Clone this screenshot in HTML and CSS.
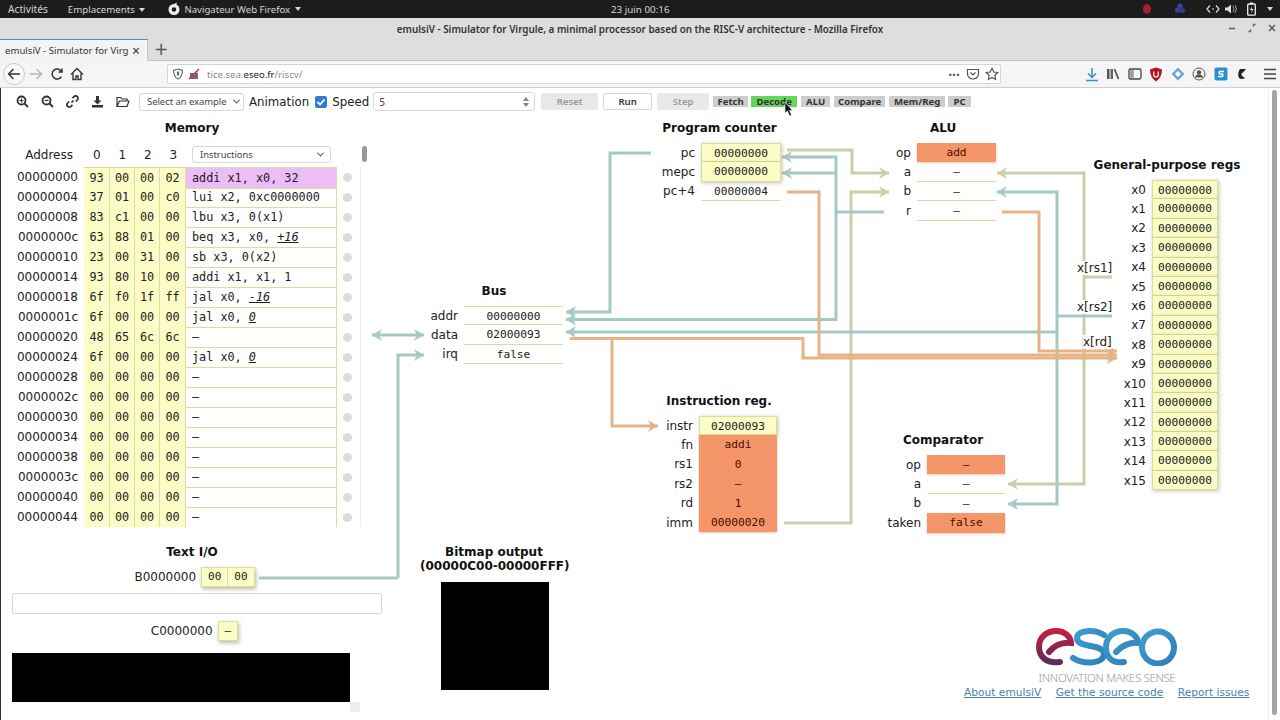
FILE: index.html
```html
<!DOCTYPE html>
<html>
  <head>
    <meta charset="utf-8">
    <title>emulsiV</title>
    <link rel="stylesheet" href="styles.css">
  </head>
  <body>
    <div class="topbar">
      <span class="top-item top-activities">Activités</span>
      <span class="top-item top-places">Emplacements <i class="caret"></i></span>
      <span class="top-item top-browser">
        <svg class="fx-icon" width="14" height="14" viewBox="0 0 14 14"><circle cx="7" cy="7.5" r="5.5" fill="#eee"/><circle cx="7" cy="7.5" r="2.2" fill="#1c1c1c"/><path d="M7 2 L10 0.5 L9 3.5z" fill="#eee"/></svg>
        Navigateur Web Firefox <i class="caret"></i>
      </span>
      <span class="top-clock">23 juin 00:16</span>
      <span class="top-tray">
        <svg width="12" height="14" viewBox="0 0 12 14"><ellipse cx="6" cy="7" rx="4" ry="5" fill="#a81c34"/></svg>
        <svg class="tray-blue" width="12" height="14" viewBox="0 0 12 14"><circle cx="6" cy="4" r="2.6" fill="#3a3f9e"/><circle cx="3.5" cy="8" r="2.6" fill="#3a3f9e"/><circle cx="8.5" cy="8.5" r="2.6" fill="#34388e"/></svg>
        <svg class="tray-net" width="14" height="10" viewBox="0 0 14 10" fill="none" stroke="#ddd" stroke-width="1.2"><path d="M4 1.5 L1 5 L4 8.5M10 1.5 L13 5 L10 8.5M6 5h2"/></svg>
        <svg class="tray-vol" width="13" height="10" viewBox="0 0 13 10"><path d="M0 3.5h2.5L6 0.5v9L2.5 6.5H0z" fill="#ddd"/><path d="M8 2 Q10 5 8 8M10 1 Q13 5 10 9" fill="none" stroke="#999"/></svg>
        <svg class="tray-bat" width="9" height="14" viewBox="0 0 9 14"><rect x="0.7" y="2" width="7.6" height="11.2" rx="1" fill="none" stroke="#eee" stroke-width="1.3"/><rect x="3" y="0.5" width="3" height="2" fill="#eee"/><path d="M5 4 L3 8h2l-1 3.5L6.5 7h-2z" fill="#eee"/></svg>
        <i class="caret caret-tray"></i>
      </span>
    </div>

    <div class="titlebar">
      <span class="title-text">emulsiV - Simulator for Virgule, a minimal processor based on the RISC-V architecture - Mozilla Firefox</span>
      <span class="win-buttons">
        <svg width="10" height="10" viewBox="0 0 10 10"><path d="M2 5.5h6" stroke="#555" stroke-width="1.4"/></svg>
        <svg width="10" height="10" viewBox="0 0 10 10"><path d="M1 9 L4 6v3zM9 1 L6 4V1z" fill="#777" stroke="#777" stroke-width=".5"/></svg>
        <svg width="10" height="10" viewBox="0 0 10 10"><path d="M2 2 L8 8M8 2 L2 8" stroke="#555" stroke-width="1.3"/></svg>
      </span>
    </div>

    <div class="tabbar">
      <div class="tab">
        <span class="tab-label">emulsiV - Simulator for Virg</span>
        <span class="tab-close">&times;</span>
      </div>
      <span class="tab-new">+</span>
    </div>

    <div class="navbar">
      <span class="nav-back">
        <svg width="14" height="14" viewBox="0 0 14 14" fill="none" stroke="#333" stroke-width="1.4"><path d="M13 7H1.5M6.5 2 L1.5 7 L6.5 12"/></svg>
      </span>
      <svg class="nav-forward" width="14" height="14" viewBox="0 0 14 14" fill="none" stroke="#b5b5b5" stroke-width="1.4"><path d="M1 7h11.5M7.5 2 L12.5 7 L7.5 12"/></svg>
      <svg class="nav-reload" width="14" height="14" viewBox="0 0 14 14" fill="none" stroke="#333" stroke-width="1.5"><path d="M11.5 9.5 A5 5 0 1 1 11.5 4.5M12 1.5v3.5H8.5"/></svg>
      <svg class="nav-home" width="14" height="14" viewBox="0 0 14 14" fill="none" stroke="#333" stroke-width="1.4"><path d="M1 7.5 L7 1.5 L13 7.5M3 6.5v6h3V9h2v3.5h3v-6"/></svg>
      <div class="urlbar">
        <svg class="url-shield" width="12" height="12" viewBox="0 0 12 12" fill="none" stroke="#666" stroke-width="1.1"><path d="M6 1 L10.5 2.5 Q10.5 8.5 6 11 Q1.5 8.5 1.5 2.5z"/><path d="M6 3.5v4" stroke-width="2"/></svg>
        <svg class="url-lock" width="12" height="12" viewBox="0 0 12 12"><rect x="2" y="5" width="8" height="6" fill="#7a6a70"/><path d="M1 11 L11 1" stroke="#c2346c" stroke-width="1.6"/></svg>
        <span class="url-text">tice.sea.<b>eseo.fr</b>/riscv/</span>
        <span class="url-end">
          <span class="url-dots">&middot;&middot;&middot;</span>
          <svg width="14" height="14" viewBox="0 0 14 14" fill="none" stroke="#555" stroke-width="1.2"><path d="M1.5 2.5h11v4.5a5.5 5 0 0 1-11 0z"/><path d="M4.5 5.5 L7 8 L9.5 5.5"/></svg>
          <svg width="14" height="14" viewBox="0 0 14 14" fill="none" stroke="#555" stroke-width="1.2"><path d="M7 1.3 L8.8 5 L12.8 5.5 L9.9 8.3 L10.6 12.4 L7 10.4 L3.4 12.4 L4.1 8.3 L1.2 5.5 L5.2 5z"/></svg>
        </span>
      </div>
      <span class="nav-tools">
        <svg width="14" height="15" viewBox="0 0 14 15" fill="none" stroke="#3a8fc8" stroke-width="1.5"><path d="M7 1v9M3 6.5 L7 10.5 L11 6.5M1 13.5h12"/></svg>
        <svg width="14" height="14" viewBox="0 0 14 14"><rect x="1" y="2" width="2.5" height="10" fill="#555"/><rect x="4.5" y="2" width="2.5" height="10" fill="#666"/><path d="M8.5 2 L12.5 12" stroke="#555" stroke-width="1.8"/></svg>
        <svg width="14" height="14" viewBox="0 0 14 14" fill="none" stroke="#444" stroke-width="1.3"><rect x="1" y="2" width="12" height="10" rx="1.5"/><rect x="2.2" y="3.2" width="3.5" height="7.6" fill="#999" stroke="none"/></svg>
        <svg width="14" height="15" viewBox="0 0 14 15"><path d="M7 .5 L13 2.5 Q13 10.5 7 14.5 Q1 10.5 1 2.5z" fill="#b01220"/><path d="M4.8 4.5v3.5a2.2 2 0 0 0 4.4 0V4.5" fill="none" stroke="#fff" stroke-width="1.2"/></svg>
        <svg width="14" height="14" viewBox="0 0 14 14"><path d="M7 .5 L13.5 7 L7 13.5 L.5 7z" fill="#6aa7d8"/><path d="M7 4 L10 7 L7 10 L4 7z" fill="#fff"/></svg>
        <svg width="14" height="14" viewBox="0 0 14 14"><circle cx="7" cy="7" r="6" fill="none" stroke="#555"/><circle cx="7" cy="5.5" r="2.2" fill="#555"/><path d="M3 10.5a4 3 0 0 1 8 0z" fill="#555"/></svg>
        <svg width="14" height="14" viewBox="0 0 14 14"><rect x=".5" y=".5" width="13" height="13" rx="2" fill="#2a8fd0"/><path d="M10 4.5H6a1.3 1.3 0 0 0 0 2.5h2a1.3 1.3 0 0 1 0 2.5H4" fill="none" stroke="#fff" stroke-width="1.5"/></svg>
        <svg width="14" height="14" viewBox="0 0 14 14"><path d="M11 2 L5 2 Q2 6 4 11 Q7 13 10 11 L7 9 Q5.5 6.5 8 5.5z" fill="#222"/></svg>
      </span>
      <svg class="nav-menu" width="14" height="12" viewBox="0 0 14 12" stroke="#444" stroke-width="1.5"><path d="M1 1.5h12M1 6h12M1 10.5h12"/></svg>
    </div>

    <div class="page">
      <div class="toolbar">
        <span class="tool-icons">
          <svg width="13" height="13" viewBox="0 0 13 13" fill="none" stroke="#333" stroke-width="1.8"><circle cx="5.5" cy="5.5" r="4"/><path d="M8.5 8.5 L12 12"/><path d="M3.5 5.5h4M5.5 3.5v4" stroke-width="1.2"/></svg>
          <svg width="13" height="13" viewBox="0 0 13 13" fill="none" stroke="#333" stroke-width="1.8"><circle cx="5.5" cy="5.5" r="4"/><path d="M8.5 8.5 L12 12"/><path d="M3.5 5.5h4" stroke-width="1.2"/></svg>
          <svg width="13" height="13" viewBox="0 0 13 13" fill="none" stroke="#333" stroke-width="1.7"><path d="M5.5 7.5 L7.5 5.5M6.5 3 L8 1.7a2.3 2.3 0 0 1 3.3 3.3L9.8 6.5M6.5 10 L5 11.3a2.3 2.3 0 0 1-3.3-3.3L3.2 6.5"/></svg>
          <svg width="13" height="13" viewBox="0 0 13 13"><path d="M5 1h3v4.5h2.5L6.5 9.5 2.5 5.5H5z" fill="#333"/><rect x="1" y="10" width="11" height="2.5" fill="#333"/></svg>
          <svg width="14" height="12" viewBox="0 0 14 12" fill="none" stroke="#333" stroke-width="1.2"><path d="M1 10.5V1.5h4l1 1.5h5v2M1 10.5h10l2-5.5H3.5z"/></svg>
        </span>
        <span class="fake-select example-select">Select an example <i class="chevron"></i></span>
        <span class="tool-label">Animation</span>
        <span class="checkbox">
          <svg width="10" height="10" viewBox="0 0 10 10" fill="none" stroke="#fff" stroke-width="1.8"><path d="M1.5 5 L4 7.5 L8.5 2.5"/></svg>
        </span>
        <span class="tool-label">Speed</span>
        <span class="speed-input">
          <span>5</span>
          <span class="spin"><i class="spin-up"></i><i class="spin-down"></i></span>
        </span>
        <span class="btn btn-reset">Reset</span>
        <span class="btn btn-run">Run</span>
        <span class="btn btn-step">Step</span>
        <span class="stage stage-fetch">Fetch</span>
        <span class="stage stage-decode">Decode</span>
        <span class="stage stage-alu">ALU</span>
        <span class="stage stage-compare">Compare</span>
        <span class="stage stage-memreg">Mem/Reg</span>
        <span class="stage stage-pc">PC</span>
      </div>

      <div class="left-col">
        <h3 class="section-title">Memory</h3>
        <div class="mem-head">
          <span class="mem-head-addr">Address</span>
          <span class="mem-head-n">0</span>
          <span class="mem-head-n">1</span>
          <span class="mem-head-n">2</span>
          <span class="mem-head-n">3</span>
          <span class="fake-select mem-select">Instructions <i class="chevron"></i></span>
          <span class="mem-thumb"></span>
        </div>
        <div class="mem-scroll">
          <div class="mem-row"><span class="addr">00000000</span><span class="hex">93</span><span class="hex">00</span><span class="hex">00</span><span class="hex">02</span><span class="asm asm-current">addi x1, x0, 32</span><span class="dot"></span></div>
          <div class="mem-row"><span class="addr">00000004</span><span class="hex">37</span><span class="hex">01</span><span class="hex">00</span><span class="hex">c0</span><span class="asm">lui x2, 0xc0000000</span><span class="dot"></span></div>
          <div class="mem-row"><span class="addr">00000008</span><span class="hex">83</span><span class="hex">c1</span><span class="hex">00</span><span class="hex">00</span><span class="asm">lbu x3, 0(x1)</span><span class="dot"></span></div>
          <div class="mem-row"><span class="addr">0000000c</span><span class="hex">63</span><span class="hex">88</span><span class="hex">01</span><span class="hex">00</span><span class="asm">beq x3, x0, <em>+16</em></span><span class="dot"></span></div>
          <div class="mem-row"><span class="addr">00000010</span><span class="hex">23</span><span class="hex">00</span><span class="hex">31</span><span class="hex">00</span><span class="asm">sb x3, 0(x2)</span><span class="dot"></span></div>
          <div class="mem-row"><span class="addr">00000014</span><span class="hex">93</span><span class="hex">80</span><span class="hex">10</span><span class="hex">00</span><span class="asm">addi x1, x1, 1</span><span class="dot"></span></div>
          <div class="mem-row"><span class="addr">00000018</span><span class="hex">6f</span><span class="hex">f0</span><span class="hex">1f</span><span class="hex">ff</span><span class="asm">jal x0, <em>-16</em></span><span class="dot"></span></div>
          <div class="mem-row"><span class="addr">0000001c</span><span class="hex">6f</span><span class="hex">00</span><span class="hex">00</span><span class="hex">00</span><span class="asm">jal x0, <em>0</em></span><span class="dot"></span></div>
          <div class="mem-row"><span class="addr">00000020</span><span class="hex">48</span><span class="hex">65</span><span class="hex">6c</span><span class="hex">6c</span><span class="asm">&ndash;</span><span class="dot"></span></div>
          <div class="mem-row"><span class="addr">00000024</span><span class="hex">6f</span><span class="hex">00</span><span class="hex">00</span><span class="hex">00</span><span class="asm">jal x0, <em>0</em></span><span class="dot"></span></div>
          <div class="mem-row"><span class="addr">00000028</span><span class="hex">00</span><span class="hex">00</span><span class="hex">00</span><span class="hex">00</span><span class="asm">&ndash;</span><span class="dot"></span></div>
          <div class="mem-row"><span class="addr">0000002c</span><span class="hex">00</span><span class="hex">00</span><span class="hex">00</span><span class="hex">00</span><span class="asm">&ndash;</span><span class="dot"></span></div>
          <div class="mem-row"><span class="addr">00000030</span><span class="hex">00</span><span class="hex">00</span><span class="hex">00</span><span class="hex">00</span><span class="asm">&ndash;</span><span class="dot"></span></div>
          <div class="mem-row"><span class="addr">00000034</span><span class="hex">00</span><span class="hex">00</span><span class="hex">00</span><span class="hex">00</span><span class="asm">&ndash;</span><span class="dot"></span></div>
          <div class="mem-row"><span class="addr">00000038</span><span class="hex">00</span><span class="hex">00</span><span class="hex">00</span><span class="hex">00</span><span class="asm">&ndash;</span><span class="dot"></span></div>
          <div class="mem-row"><span class="addr">0000003c</span><span class="hex">00</span><span class="hex">00</span><span class="hex">00</span><span class="hex">00</span><span class="asm">&ndash;</span><span class="dot"></span></div>
          <div class="mem-row"><span class="addr">00000040</span><span class="hex">00</span><span class="hex">00</span><span class="hex">00</span><span class="hex">00</span><span class="asm">&ndash;</span><span class="dot"></span></div>
          <div class="mem-row"><span class="addr">00000044</span><span class="hex">00</span><span class="hex">00</span><span class="hex">00</span><span class="hex">00</span><span class="asm">&ndash;</span><span class="dot"></span></div>
        </div>

        <h3 class="section-title text-io-title">Text I/O</h3>
        <div class="io-row">
          <span class="io-addr">B0000000</span>
          <span class="io-cells"><span class="io-cell">00</span><span class="io-cell">00</span></span>
        </div>
        <div class="text-input"></div>
        <div class="io-row">
          <span class="io-addr">C0000000</span>
          <span class="io-cells"><span class="io-cell">&ndash;</span></span>
        </div>
        <div class="text-screen"></div>
      </div>

      <div class="diagram">
        <svg class="wires" width="1280" height="632" viewBox="0 88 1280 632" fill="none" stroke-width="3">
          <defs>
            <marker id="head-teal" markerUnits="userSpaceOnUse" markerWidth="11" markerHeight="12" refX="10" refY="6" orient="auto-start-reverse"><path d="M0 0 L10 6 L0 12 L3 6z" fill="#a4c9c6"/></marker>
            <marker id="head-olive" markerUnits="userSpaceOnUse" markerWidth="11" markerHeight="12" refX="10" refY="6" orient="auto"><path d="M0 0 L10 6 L0 12 L3 6z" fill="#c8cfa9"/></marker>
            <marker id="head-orange" markerUnits="userSpaceOnUse" markerWidth="11" markerHeight="12" refX="10" refY="6" orient="auto"><path d="M0 0 L10 6 L0 12 L3 6z" fill="#e6b384"/></marker>
          </defs>
          <g class="wire-olive" marker-end="url(#head-olive)">
            <path d="M787 150 H852 V173 H889"/>
            <path d="M784 523 H851 V192 H889"/>
            <path d="M1084 277 V173 H997"/>
            <path d="M1084 277 V484 H1008"/>
          </g>
          <path class="wire-olive" d="M1084 277 H1112"/>
          <g class="wire-teal" marker-end="url(#head-teal)">
            <path d="M651 153 H610 V312 H566"/>
            <path d="M884 212 H836 V319.5 H566"/>
            <path d="M836 212 V157 H782"/>
            <path d="M836 173 H782"/>
            <path d="M1057 332 H566"/>
            <path d="M1057 316 V192 H997"/>
            <path d="M1057 316 V504 H1008"/>
            <path d="M398 578 V355 H424"/>
          </g>
          <path class="wire-teal" d="M1057 316 H1112"/>
          <path class="wire-teal" d="M259 578 H398"/>
          <path class="wire-teal" marker-start="url(#head-teal)" marker-end="url(#head-teal)" d="M372 335 H424"/>
          <g class="wire-orange" marker-end="url(#head-orange)">
            <path d="M787 192 H819 V355 H1117"/>
            <path d="M570 338.5 H803 V358 H1117"/>
            <path d="M612 338.5 V426 H658"/>
            <path d="M1002 212 H1039 V351 H1117"/>
          </g>
        </svg>

        <div class="panel panel-pc">
          <h3 class="section-title">Program counter</h3>
          <div class="row"><span class="lbl">pc</span><span class="val reg">00000000</span></div>
          <div class="row"><span class="lbl">mepc</span><span class="val reg">00000000</span></div>
          <div class="row"><span class="lbl">pc+4</span><span class="val plain">00000004</span></div>
        </div>

        <div class="panel panel-alu">
          <h3 class="section-title">ALU</h3>
          <div class="row"><span class="lbl">op</span><span class="val active">add</span></div>
          <div class="row"><span class="lbl">a</span><span class="val plain">&ndash;</span></div>
          <div class="row"><span class="lbl">b</span><span class="val plain">&ndash;</span></div>
          <div class="row"><span class="lbl">r</span><span class="val plain">&ndash;</span></div>
        </div>

        <div class="panel panel-bus">
          <h3 class="section-title">Bus</h3>
          <div class="row"><span class="lbl">addr</span><span class="val plain first">00000000</span></div>
          <div class="row"><span class="lbl">data</span><span class="val plain">02000093</span></div>
          <div class="row"><span class="lbl">irq</span><span class="val plain">false</span></div>
        </div>

        <div class="panel panel-instr">
          <h3 class="section-title">Instruction reg.</h3>
          <div class="row"><span class="lbl">instr</span><span class="val reg">02000093</span></div>
          <div class="row"><span class="lbl">fn</span><span class="val active">addi</span></div>
          <div class="row"><span class="lbl">rs1</span><span class="val active">0</span></div>
          <div class="row"><span class="lbl">rs2</span><span class="val active">&ndash;</span></div>
          <div class="row"><span class="lbl">rd</span><span class="val active">1</span></div>
          <div class="row"><span class="lbl">imm</span><span class="val active">00000020</span></div>
        </div>

        <div class="panel panel-cmp">
          <h3 class="section-title">Comparator</h3>
          <div class="row"><span class="lbl">op</span><span class="val active">&ndash;</span></div>
          <div class="row"><span class="lbl">a</span><span class="val plain">&ndash;</span></div>
          <div class="row"><span class="lbl">b</span><span class="val bare">&ndash;</span></div>
          <div class="row"><span class="lbl">taken</span><span class="val active">false</span></div>
        </div>

        <div class="panel panel-regs">
          <h3 class="section-title">General-purpose regs</h3>
          <div class="row"><span class="lbl">x0</span><span class="val reg">00000000</span></div>
          <div class="row"><span class="lbl">x1</span><span class="val reg">00000000</span></div>
          <div class="row"><span class="lbl">x2</span><span class="val reg">00000000</span></div>
          <div class="row"><span class="lbl">x3</span><span class="val reg">00000000</span></div>
          <div class="row"><span class="lbl">x4</span><span class="val reg">00000000</span></div>
          <div class="row"><span class="lbl">x5</span><span class="val reg">00000000</span></div>
          <div class="row"><span class="lbl">x6</span><span class="val reg">00000000</span></div>
          <div class="row"><span class="lbl">x7</span><span class="val reg">00000000</span></div>
          <div class="row"><span class="lbl">x8</span><span class="val reg">00000000</span></div>
          <div class="row"><span class="lbl">x9</span><span class="val reg">00000000</span></div>
          <div class="row"><span class="lbl">x10</span><span class="val reg">00000000</span></div>
          <div class="row"><span class="lbl">x11</span><span class="val reg">00000000</span></div>
          <div class="row"><span class="lbl">x12</span><span class="val reg">00000000</span></div>
          <div class="row"><span class="lbl">x13</span><span class="val reg">00000000</span></div>
          <div class="row"><span class="lbl">x14</span><span class="val reg">00000000</span></div>
          <div class="row"><span class="lbl">x15</span><span class="val reg">00000000</span></div>
        </div>

        <span class="wire-label wire-rs1">x[rs1]</span>
        <span class="wire-label wire-rs2">x[rs2]</span>
        <span class="wire-label wire-rd">x[rd]</span>

        <div class="panel panel-bitmap">
          <h3 class="section-title">Bitmap output<br>(00000C00-00000FFF)</h3>
          <div class="bitmap"></div>
        </div>

        <div class="logo">
          <svg width="142" height="38" viewBox="0 0 142 38" fill="none" stroke-width="6" stroke-linecap="round">
            <defs>
              <linearGradient id="logo-red" x1="0" y1="0" x2="0" y2="1"><stop offset="0" stop-color="#c4203c"/><stop offset="1" stop-color="#5e2a5e"/></linearGradient>
              <linearGradient id="logo-blue" x1="0" y1="0" x2="1" y2="1"><stop offset="0" stop-color="#3f9cd0"/><stop offset="1" stop-color="#2f7fb8"/></linearGradient>
            </defs>
            <path stroke="url(#logo-red)" d="M24 34 C10 36 3 28 3 19 C3 9 11 3 20 3 C29 3 35 9 35 15 C26 14 18 18 13 24"/>
            <path stroke="url(#logo-blue)" d="M68 7 C58 1 41 2 41 10 C41 21 68 15 68 26 C68 36 48 37 37 30"/>
            <path stroke="url(#logo-blue)" d="M88 34 C75 36 70 28 70 19 C70 9 78 3 87 3 C96 3 102 9 102 15 C94 14 85 18 80 24"/>
            <circle stroke="url(#logo-blue)" cx="122" cy="19.5" r="16"/>
          </svg>
          <span class="logo-text">INNOVATION MAKES SENSE</span>
        </div>

        <div class="links">
          <a class="link">About emulsiV</a>
          <a class="link">Get the source code</a>
          <a class="link">Report issues</a>
        </div>
      </div>

      <span class="page-scrollbar"></span>
    </div>

    <svg class="cursor" width="10" height="15" viewBox="0 0 10 15"><path d="M1 0 L1 11 L3.5 9 L5.5 14 L7.5 13 L5.5 8.5 L8.5 8.5z" fill="#111" stroke="#fff" stroke-width=".6"/></svg>
  </body>
</html>
```

FILE: styles.css
```css
* {
  box-sizing: border-box;
}
html,
body {
  margin: 0;
  height: 720px;
  overflow: hidden;
}
body {
  font-family: "DejaVu Sans", sans-serif;
  font-size: 12px;
  color: #222;
  background: white;
}
h3 {
  margin: 0;
}

/* desktop top bar */
.topbar {
  height: 18px;
  background: #1c1c1c;
  color: #d6d6d6;
  font-family: "Noto Sans", sans-serif;
  font-size: 10.2px;
  display: flex;
  align-items: center;
  padding-left: 8px;
  position: relative;
}
.top-places {
  margin-left: 20px;
  font-size: 9.7px;
}
.top-browser {
  margin-left: 22px;
  display: flex;
  align-items: center;
  gap: 3px;
  font-size: 9.6px;
}
.caret {
  display: inline-block;
  width: 0;
  height: 0;
  border-left: 3.5px solid transparent;
  border-right: 3.5px solid transparent;
  border-top: 4px solid #d6d6d6;
  margin-left: 2px;
  vertical-align: 1px;
}
.top-clock {
  position: absolute;
  left: 611px;
  font-size: 9.8px;
}
.top-tray {
  margin-left: auto;
  display: flex;
  align-items: center;
  padding-right: 7px;
}
.tray-blue {
  margin-left: 21px;
}
.tray-net {
  margin-left: 20px;
}
.tray-vol {
  margin-left: 5px;
}
.tray-bat {
  margin-left: 9px;
}
.caret-tray {
  margin-left: 11px;
}

/* window title and tabs */
.titlebar {
  height: 21px;
  background: #dedede;
  position: relative;
  display: flex;
  justify-content: center;
  align-items: center;
  font-family: "Noto Sans", sans-serif;
  font-size: 9.85px;
  font-weight: 600;
  color: #333;
}
.win-buttons {
  position: absolute;
  right: 3px;
  top: 5px;
  display: flex;
  gap: 10px;
}
.tabbar {
  height: 22px;
  background: #dedede;
  display: flex;
  align-items: stretch;
  border-bottom: 1px solid #c4c4c4;
}
.tab {
  width: 148px;
  height: 22px;
  background: #f3f3f3;
  border-top: 1px solid #4a8fd0;
  border-right: 1px solid #c4c4c4;
  display: flex;
  align-items: center;
  padding-left: 5px;
  font-family: "Noto Sans", sans-serif;
  font-size: 9.6px;
  color: #333;
}
.tab-label {
  width: 126px;
  white-space: nowrap;
}
.tab-close {
  font-size: 14px;
  margin-left: 1px;
}
.tab-new {
  font-size: 17px;
  color: #555;
  margin-left: 6px;
  line-height: 20px;
}

/* browser navigation */
.navbar {
  height: 27px;
  background: #f5f5f5;
  border-bottom: 1px solid #cfcfcf;
  display: flex;
  align-items: center;
  position: relative;
}
.nav-back {
  width: 22px;
  height: 22px;
  margin-left: 3px;
  border: 1px solid #c9c9c9;
  border-radius: 50%;
  background: #fafafa;
  display: flex;
  align-items: center;
  justify-content: center;
}
.nav-forward {
  margin-left: 4px;
}
.nav-reload {
  margin-left: 7px;
}
.nav-home {
  margin-left: 6px;
}
.urlbar {
  width: 834px;
  height: 20px;
  margin-left: 83px;
  background: white;
  border: 1px solid #d4d4d4;
  border-radius: 2px;
  display: flex;
  align-items: center;
  padding-left: 4px;
  font-family: "Noto Sans", sans-serif;
  font-size: 9.6px;
  color: #888;
}
.url-shield {
  margin-right: 4px;
}
.url-text {
  margin-left: 7px;
}
.url-text b {
  font-weight: 400;
  color: #222;
}
.url-end {
  margin-left: auto;
  display: flex;
  align-items: center;
  gap: 5px;
  margin-right: 1px;
}
.url-dots {
  font-size: 14px;
  font-weight: 700;
  color: #555;
  margin-right: 1px;
}
.nav-tools {
  margin-left: 83.5px;
  display: flex;
  align-items: center;
  gap: 7.5px;
}
.nav-menu {
  margin-left: 14px;
}

/* page */
.page {
  height: 632px;
  position: relative;
  border-left: 1px solid #333;
}
.toolbar {
  height: 27px;
  display: flex;
  align-items: center;
  padding-left: 15px;
}
.tool-icons {
  display: flex;
  align-items: center;
  gap: 12px;
}
.fake-select {
  border: 1px solid #d8d8d8;
  border-radius: 3px;
  background: white;
  font-family: "Noto Sans", sans-serif;
  font-size: 9.4px;
  color: #444;
  display: flex;
  align-items: center;
  justify-content: space-between;
  white-space: nowrap;
}
.chevron {
  display: inline-block;
  width: 5px;
  height: 5px;
  border-right: 1.3px solid #444;
  border-bottom: 1.3px solid #444;
  transform: rotate(45deg) translate(-1px, -1px);
}
.example-select {
  width: 105px;
  height: 18px;
  margin-left: 9px;
  padding: 0 4px 0 7px;
}
.tool-label {
  font-size: 11.8px;
}
.example-select + .tool-label {
  margin-left: 5px;
}
.checkbox {
  width: 12px;
  height: 12px;
  margin: 0 5px 0 6px;
  background: #2f7fd0;
  border-radius: 2px;
  display: flex;
  align-items: center;
  justify-content: center;
}
.speed-input {
  width: 162px;
  height: 19px;
  margin-left: 4px;
  border: 1px solid #d8d8d8;
  border-radius: 3px;
  font-family: "Noto Sans", sans-serif;
  font-size: 10px;
  color: #444;
  display: flex;
  align-items: center;
  justify-content: space-between;
  padding: 0 5px;
}
.spin {
  display: flex;
  flex-direction: column;
  gap: 2px;
}
.spin i {
  display: block;
  width: 0;
  height: 0;
  border-left: 3px solid transparent;
  border-right: 3px solid transparent;
}
.spin-up {
  border-bottom: 4px solid #888;
}
.spin-down {
  border-top: 4px solid #888;
}
.btn {
  height: 17px;
  border-radius: 2px;
  font-family: "Noto Sans", sans-serif;
  font-size: 9.6px;
  font-weight: 600;
  display: flex;
  align-items: center;
  justify-content: center;
}
.btn-reset,
.btn-step {
  background: #e9e9e9;
  color: #999;
}
.btn-reset {
  width: 57px;
  margin-left: 6px;
}
.btn-run {
  width: 49px;
  margin-left: 5px;
  border: 1px solid #d8d8d8;
  color: #333;
}
.btn-step {
  width: 52px;
  margin-left: 5px;
}
.stage {
  height: 11px;
  background: #cdcdcd;
  font-family: "Noto Sans", sans-serif;
  font-size: 9.6px;
  font-weight: 700;
  color: #333;
  display: flex;
  align-items: center;
  justify-content: center;
  margin-left: 4px;
}
.stage-fetch {
  width: 35px;
}
.stage-decode {
  width: 46px;
  margin-left: 3px;
  background: #66d65a;
}
.stage-alu {
  width: 29px;
}
.stage-compare {
  width: 51px;
}
.stage-memreg {
  width: 56px;
}
.stage-pc {
  width: 23px;
  margin-left: 3px;
}

.section-title {
  font-size: 12px;
  font-weight: 700;
  line-height: 18px;
  text-align: center;
  color: #111;
  white-space: nowrap;
}

/* memory and text i/o */
.left-col {
  width: 382px;
  padding-top: 4px;
}
.mem-head {
  height: 16px;
  margin-top: 9px;
  display: grid;
  grid-template-columns: 83px 25.5px 25.5px 25.5px 25.5px 139px;
  align-items: center;
  justify-items: center;
  position: relative;
}
.mem-head-addr {
  justify-self: end;
  padding-right: 11px;
}
.fake-select.mem-select {
  width: 139px;
  height: 17px;
  margin-left: 6px;
  padding: 0 7px;
  justify-self: start;
}
.mem-scroll {
  margin-top: 5px;
  width: 360px;
  height: 360px;
  overflow: hidden;
  border-right: 1px solid #eee;
}
.mem-row {
  height: 20px;
  display: grid;
  grid-template-columns: 83px 26px 25px 25px 26px 151px 21px;
  align-items: stretch;
  font-family: "DejaVu Sans Mono", monospace;
  font-size: 11.8px;
  line-height: 20px;
}
.addr {
  font-family: "DejaVu Sans", sans-serif;
  font-size: 12px;
  text-align: right;
  padding-right: 6px;
}
.hex {
  background: #fbfcc6;
  border-bottom: 1px solid #d9dd9f;
  border-right: 1px solid #d9dd9f;
  text-align: center;
}
.mem-row:first-child .hex,
.mem-row:first-child .asm {
  border-top: 1px solid #d9dd9f;
}
.asm {
  border-bottom: 1px solid #d9dd9f;
  border-right: 1px solid #d9dd9f;
  padding-left: 6px;
  white-space: nowrap;
}
.asm em {
  text-decoration: underline;
}
.asm-current {
  background: #ecbdf6;
}
.dot {
  width: 9px;
  height: 9px;
  margin: 6px 0 0 6px;
  border-radius: 50%;
  background: #dcdcdc;
}
.mem-thumb {
  position: absolute;
  left: 361px;
  top: 0;
  width: 5px;
  height: 16px;
  background: #999;
  border-radius: 3px;
}
.text-io-title {
  margin-top: 16px;
}
.io-row {
  height: 20px;
  margin-top: 6px;
  padding-left: 5px;
  display: flex;
  justify-content: center;
  align-items: center;
  gap: 5px;
}
.io-cells {
  display: flex;
  height: 20px;
  background: #fbfcc6;
  border: 1px solid #d9dd9f;
  box-shadow: 1px 2px 4px rgba(120, 120, 70, 0.5);
  font-family: "DejaVu Sans Mono", monospace;
  font-size: 11px;
}
.io-cell {
  min-width: 16px;
  padding: 0 6px;
  text-align: center;
  line-height: 18px;
}
.io-cell + .io-cell {
  border-left: 1px solid #d9dd9f;
}
.text-input {
  width: 370px;
  height: 21px;
  margin: 6px 0 7px 11px;
  border: 1px solid #d8d8d8;
  border-radius: 2px;
}
.text-screen {
  width: 338px;
  height: 49px;
  margin: 12px 0 0 11px;
  background: black;
  position: relative;
}
.text-screen::after {
  content: "";
  position: absolute;
  left: 338px;
  top: 49px;
  width: 10px;
  height: 10px;
  background: #eee;
}

/* free canvas with the datapath */
.diagram {
  position: absolute;
  left: -1px;
  top: 0;
  width: 1280px;
  height: 632px;
}
.wires {
  position: absolute;
  left: 0;
  top: 0;
}
.wire-teal {
  stroke: #a4c9c6;
}
.wire-olive {
  stroke: #c8cfa9;
}
.wire-orange {
  stroke: #e6b384;
}
.panel {
  position: absolute;
}
.panel .section-title {
  display: flex;
  justify-content: center;
  margin-bottom: 6px;
}
.row {
  display: flex;
  height: 19.4px;
  justify-content: flex-end;
  align-items: center;
}
.lbl {
  padding-right: 6px;
  white-space: nowrap;
}
.val {
  width: var(--cell);
  height: 19.4px;
  font-family: "DejaVu Sans Mono", monospace;
  font-size: 11.2px;
  line-height: 19.5px;
  text-align: center;
}
.reg {
  background: #fbfcc6;
  border: 1px solid #d9dd9f;
  border-top-width: 0;
  box-shadow: 1px 1px 4px rgba(120, 120, 70, 0.45);
}
.section-title + .row .reg {
  border-top-width: 1px;
}
.plain {
  border-bottom: 1px solid #d9dd9f;
}
.plain.first {
  border-top: 1px solid #d9dd9f;
}
.active {
  background: #f5966a;
  color: #4a0c00;
  box-shadow: 0 1px 2px rgba(200, 120, 60, 0.4);
}
.panel-pc {
  left: 658px;
  top: 31px;
  width: 123px;
  --cell: 80px;
}
.panel-alu {
  left: 890px;
  top: 31px;
  width: 106px;
  --cell: 79px;
}
.panel-bus {
  left: 425px;
  top: 194px;
  width: 138px;
  --cell: 99px;
}
.panel-instr {
  left: 661px;
  top: 304px;
  width: 116px;
  --cell: 78px;
}
.panel-cmp {
  left: 881px;
  top: 343px;
  width: 124px;
  --cell: 78px;
}
.panel-regs {
  left: 1116px;
  top: 68px;
  width: 102px;
  --cell: 66px;
}
.wire-label {
  position: absolute;
  line-height: 14px;
  background: white;
}
.wire-rs1 {
  left: 1077px;
  top: 173px;
}
.wire-rs2 {
  left: 1077px;
  top: 212px;
}
.wire-rd {
  left: 1083px;
  top: 247px;
}
.panel-bitmap {
  left: 420px;
  top: 457px;
  width: 148px;
}
.panel-bitmap .section-title {
  margin-bottom: 9px;
  display: block;
  line-height: 14px;
}
.bitmap {
  width: 108px;
  height: 108px;
  margin-left: 21px;
  background: black;
}
.logo {
  position: absolute;
  left: 1036px;
  top: 540px;
  width: 142px;
  display: flex;
  flex-direction: column;
}
.logo-text {
  margin-top: 6px;
  font-family: "Noto Sans", sans-serif;
  font-size: 11.5px;
  font-weight: 300;
  letter-spacing: -0.35px;
  line-height: 11px;
  color: #999;
  text-align: center;
  white-space: nowrap;
}
.links {
  position: absolute;
  left: 964px;
  top: 598px;
  display: flex;
  gap: 14.5px;
  font-size: 10.65px;
}
.link {
  color: #4d7fa8;
  text-decoration: underline;
}
.page-scrollbar {
  position: absolute;
  right: 0;
  top: 0;
  width: 12px;
  height: 632px;
  background: white;
  border-left: 1px solid #eee;
}
.page-scrollbar::after {
  content: "";
  position: absolute;
  left: 3px;
  top: 2px;
  width: 5px;
  height: 625px;
  background: #a3a3a3;
  border-radius: 3px;
}
.cursor {
  position: absolute;
  left: 784px;
  top: 102px;
}
```
